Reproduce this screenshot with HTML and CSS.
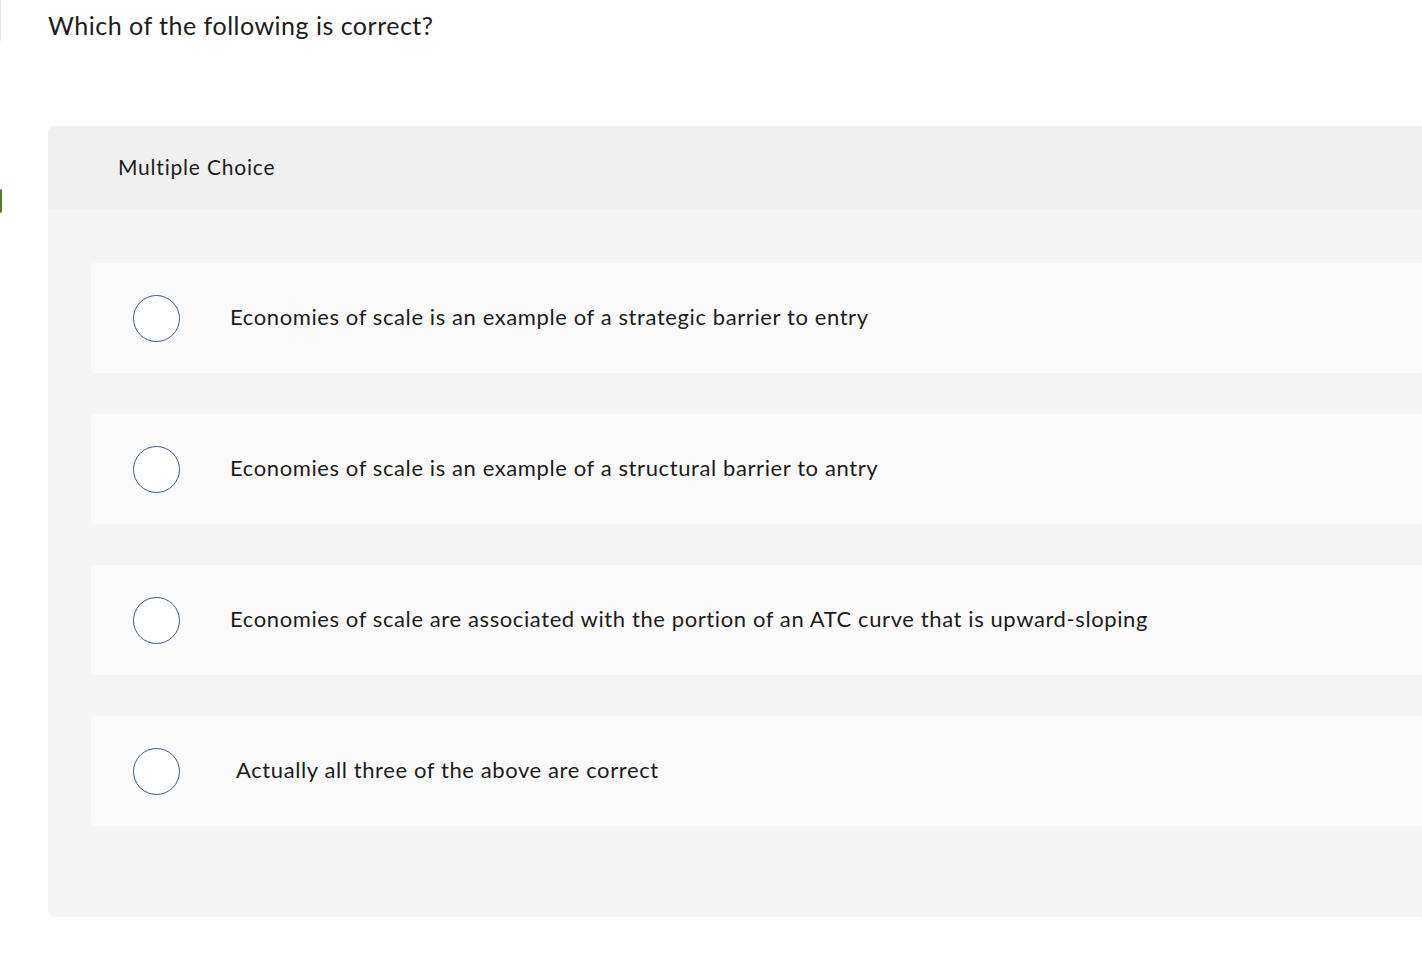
FILE: index.html
```html
<!DOCTYPE html>
<html>
<head>
<meta charset="utf-8">
<link rel="stylesheet" href="styles.css">
</head>
<body>
<div class="edge-line"></div>
<div class="edge-green"></div>
<main class="page">
  <h1 class="question">Which of the following is correct?</h1>
  <section class="panel">
    <div class="panel-head">Multiple Choice</div>
    <div class="panel-body">
      <div class="option"><span class="radio"></span><span class="label">Economies of scale is an example of a strategic barrier to entry</span></div>
      <div class="option"><span class="radio"></span><span class="label">Economies of scale is an example of a structural barrier to antry</span></div>
      <div class="option"><span class="radio"></span><span class="label">Economies of scale are associated with the portion of an ATC curve that is upward-sloping</span></div>
      <div class="option"><span class="radio"></span><span class="label label-indent">Actually all three of the above are correct</span></div>
    </div>
  </section>
</main>
</body>
</html>
```

FILE: styles.css
```css
html, body {
  margin: 0;
  padding: 0;
  background: #ffffff;
  overflow: hidden;
}
body {
  font-family: Lato, "Open Sans", "Liberation Sans", sans-serif;
  color: #1c1c1c;
  width: 1422px;
  height: 978px;
  position: relative;
}
.edge-line {
  position: absolute;
  left: 0;
  top: 0;
  width: 1px;
  height: 41px;
  background: #e6e6e6;
}
.edge-green {
  position: absolute;
  left: 0;
  top: 189px;
  width: 2px;
  height: 24px;
  background: #4f7d2c;
  border-radius: 0 2px 2px 0;
}
.page {
  padding-left: 48px;
}
.question {
  margin: 0;
  padding-top: 10px;
  font-size: 25px;
  line-height: 30px;
  font-weight: 400;
  letter-spacing: 0.5px;
  height: 126px;
  box-sizing: border-box;
}
.panel {
  width: 1420px;
  border-radius: 6px;
  overflow: hidden;
  background: #f4f4f4;
}
.panel-head {
  background: #f0f0f0;
  height: 83px;
  box-sizing: border-box;
  padding-left: 70px;
  padding-bottom: 2px;
  display: flex;
  align-items: center;
  font-size: 21px;
  letter-spacing: 0.8px;
}
.panel-body {
  padding: 54px 0 91px 43px;
  display: flex;
  flex-direction: column;
  gap: 41px;
}
.option {
  height: 110px;
  background: #fafafa;
  border-radius: 4px;
  display: flex;
  align-items: center;
  padding-left: 42px;
}
.radio {
  width: 45px;
  height: 45px;
  border: 1px solid #3e5a87;
  border-radius: 50%;
  background: #ffffff;
  flex: none;
}
.label {
  margin-left: 50px;
  margin-bottom: 3px;
  font-size: 22px;
  letter-spacing: 0.6px;
}
.label-indent {
  margin-left: 56px;
}
```
